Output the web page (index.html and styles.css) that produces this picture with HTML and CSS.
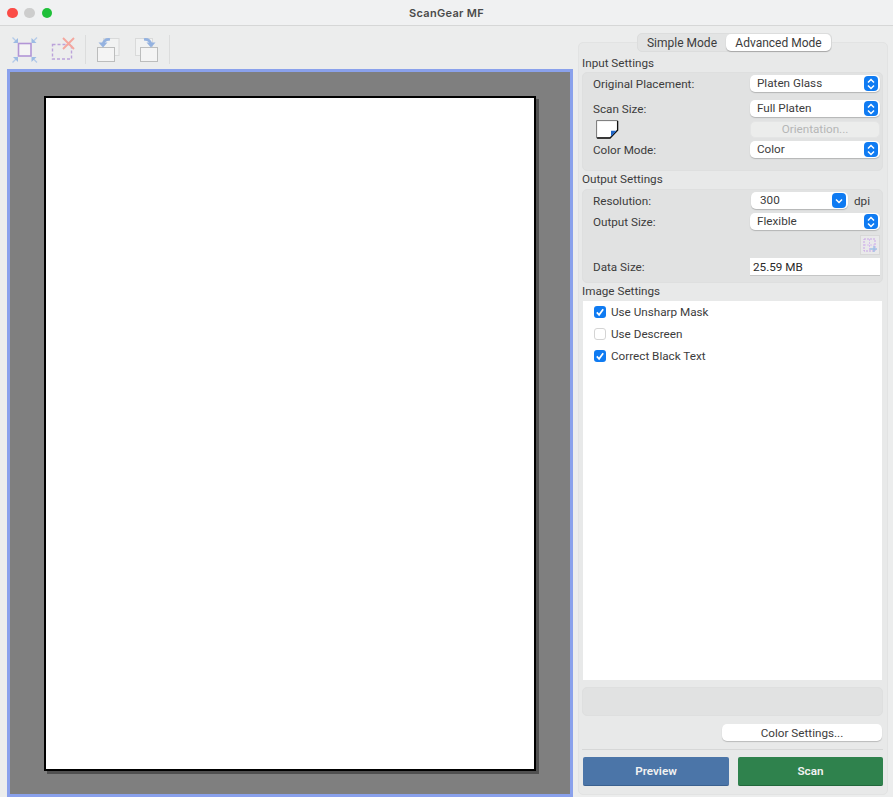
FILE: index.html
```html
<!DOCTYPE html>
<html lang="en">
<head>
  <meta charset="UTF-8">
  <meta name="viewport" content="width=device-width, initial-scale=1.0">
  <title>ScanGear MF</title>
  <link rel="stylesheet" href="styles.css">
</head>
<body>
  <div class="titlebar">
    <div class="lights">
      <span class="light red"></span>
      <span class="light gray"></span>
      <span class="light green"></span>
    </div>
    <div class="title">ScanGear MF</div>
  </div>

  <div class="main">
    <div class="left">
      <div class="toolbar">
        <svg class="tool" width="26" height="28" viewBox="0 0 26 28">
          <rect x="6.500" y="7.500" width="12.500" height="12.500" fill="#f4f4f4" stroke="#b295d6" stroke-width="1.600"/>
          <g fill="none" stroke="#b4cbe9" stroke-width="1.300">
            <path d="M0.500 1.500l4 4M0.500 26.500l4-4M25 1.500l-4 4M25 26.500l-4-4"/>
          </g>
          <g fill="#9dbbe4">
            <path d="M6 7v-5l-5 5z"/>
            <path d="M6 21v5l-5-5z"/>
            <path d="M19.500 7v-5l5 5z"/>
            <path d="M19.500 21v5l5-5z"/>
          </g>
        </svg>
        <svg class="tool" width="26" height="28" viewBox="0 0 26 28">
          <rect x="2.500" y="8.500" width="19" height="14.500" fill="none" stroke="#bba3da" stroke-width="1.400" stroke-dasharray="3 2"/>
          <path d="M13 2l11 11M24 2l-11 11" fill="none" stroke="#f5a79e" stroke-width="1.900"/>
        </svg>
        <span class="tool-sep"></span>
        <svg class="tool" width="26" height="28" viewBox="0 0 26 28">
          <rect x="7.500" y="2.500" width="15.500" height="17" fill="#f1f2f2" stroke="#d9dada"/>
          <rect x="1.500" y="11.500" width="17" height="14" fill="#f4f4f4" stroke="#bcbdbd"/>
          <path d="M14 3.500c-3.500-.6-6 .8-7 4.500" fill="none" stroke="#94b2e0" stroke-width="2.600"/>
          <path d="M2.500 6.500h9l-4.500 5z" fill="#94b2e0"/>
        </svg>
        <svg class="tool" width="26" height="28" viewBox="0 0 26 28">
          <rect x="1.500" y="2.500" width="17" height="17" fill="#f1f2f2" stroke="#d9dada"/>
          <rect x="6.500" y="11.500" width="17" height="14" fill="#f4f4f4" stroke="#bcbdbd"/>
          <path d="M10 3.500c3.500-.6 6 .8 7 4.500" fill="none" stroke="#94b2e0" stroke-width="2.600"/>
          <path d="M21.500 6.500h-9l4.500 5z" fill="#94b2e0"/>
        </svg>
        <span class="tool-sep"></span>
      </div>
      <div class="preview">
        <div class="paper"></div>
      </div>
    </div>

    <div class="right">
      <div class="tabs">
        <div class="tab">Simple Mode</div>
        <div class="tab active">Advanced Mode</div>
      </div>
      <div class="panel">
        <div class="section-label first">Input Settings</div>
        <div class="group input-group">
          <div class="row">
            <label>Original Placement:</label>
            <div class="select">Platen Glass<span class="stepper"><svg width="8" height="12" viewBox="0 0 8 12"><path d="M1 4.500l3-3 3 3M1 7.500l3 3 3-3" fill="none" stroke="#fff" stroke-width="1.500"/></svg></span></div>
          </div>
          <div class="row gap-8">
            <label>Scan Size:</label>
            <div class="select">Full Platen<span class="stepper"><svg width="8" height="12" viewBox="0 0 8 12"><path d="M1 4.500l3-3 3 3M1 7.500l3 3 3-3" fill="none" stroke="#fff" stroke-width="1.500"/></svg></span></div>
          </div>
          <div class="row orient-row">
            <svg class="page-icon" width="23" height="19" viewBox="0 0 23 19">
              <path d="M.600 .600h21v9.500l-7.500 7.800h-13.500z" fill="#fff" stroke="#555" stroke-width=".8"/>
              <path d="M21.600 1v9.300l-7.500 7.700h-13" fill="none" stroke="#111" stroke-width="1.300"/>
              <path d="M15 16.500l5.500-5.700h-5.500z" fill="#1f66c8"/>
            </svg>
            <div class="plain-btn disabled">Orientation...</div>
          </div>
          <div class="row gap-3">
            <label>Color Mode:</label>
            <div class="select">Color<span class="stepper"><svg width="8" height="12" viewBox="0 0 8 12"><path d="M1 4.500l3-3 3 3M1 7.500l3 3 3-3" fill="none" stroke="#fff" stroke-width="1.500"/></svg></span></div>
          </div>
        </div>

        <div class="section-label">Output Settings</div>
        <div class="group output-group">
          <div class="row">
            <label>Resolution:</label>
            <div class="res-wrap">
              <div class="select res">300<span class="stepper"><svg width="8" height="6" viewBox="0 0 8 6"><path d="M1 1.500l3 3 3-3" fill="none" stroke="#fff" stroke-width="1.500"/></svg></span></div>
              <span class="unit">dpi</span>
            </div>
          </div>
          <div class="row gap-4">
            <label>Output Size:</label>
            <div class="select">Flexible<span class="stepper"><svg width="8" height="12" viewBox="0 0 8 12"><path d="M1 4.500l3-3 3 3M1 7.500l3 3 3-3" fill="none" stroke="#fff" stroke-width="1.500"/></svg></span></div>
          </div>
          <div class="size-tool">
            <svg width="20" height="20" viewBox="0 0 20 20">
              <rect x=".5" y=".5" width="19" height="19" fill="#e9e9ea" stroke="#d8d8d8"/>
              <rect x="4" y="4" width="11" height="12" fill="none" stroke="#c9a5e8" stroke-dasharray="2 1"/>
              <path d="M4 10h11M9.500 4v12" fill="none" stroke="#d7bdee" stroke-dasharray="2 1"/>
              <path d="M10 14h7M14 11v6" fill="none" stroke="#9fc0e6" stroke-width="1.400"/>
            </svg>
          </div>
          <div class="row gap-3">
            <label>Data Size:</label>
            <div class="field">25.59 MB</div>
          </div>
        </div>

        <div class="section-label">Image Settings</div>
        <div class="image-list">
          <div class="check-row"><span class="check on"><svg width="12" height="12" viewBox="0 0 12 12"><path d="M2.800 6.300l2.300 2.500 4.100-5.600" fill="none" stroke="#fff" stroke-width="1.700"/></svg></span>Use Unsharp Mask</div>
          <div class="check-row"><span class="check"></span>Use Descreen</div>
          <div class="check-row"><span class="check on"><svg width="12" height="12" viewBox="0 0 12 12"><path d="M2.800 6.300l2.300 2.500 4.100-5.600" fill="none" stroke="#fff" stroke-width="1.700"/></svg></span>Correct Black Text</div>
        </div>

        <div class="empty-box"></div>
        <div class="color-row">
          <div class="plain-btn color-btn">Color Settings...</div>
        </div>
        <div class="separator"></div>
        <div class="actions">
          <div class="action preview-btn">Preview</div>
          <div class="action scan-btn">Scan</div>
        </div>
      </div>
    </div>
  </div>
</body>
</html>
```

FILE: styles.css
```css
* {
  box-sizing: border-box;
}
html, body {
  height: 100%;
}
body {
  margin: 0;
  width: 893px;
  height: 797px;
  overflow: hidden;
  background: #eceded;
  font-family: Roboto, "Liberation Sans", sans-serif;
  font-size: 11.700px;
  color: #3c3c3c;
}
.titlebar {
  height: 26px;
  display: flex;
  align-items: center;
  justify-content: center;
  background: #f0f1f2;
  border-bottom: 1px solid #d6d7d7;
  position: relative;
}
.lights {
  position: absolute;
  left: 7px;
  top: 7.500px;
  display: flex;
  gap: 6.800px;
}
.light {
  width: 10.500px;
  height: 10.500px;
  border-radius: 50%;
}
.light.red { background: #fb4c47; }
.light.gray { background: #cdcdcd; }
.light.green { background: #1fc039; }
.title {
  font-family: Inter, sans-serif;
  font-size: 11px;
  font-weight: 600;
  color: #4a4a4a;
  letter-spacing: 0.3px;
}
.main {
  display: flex;
  height: 771px;
}
.left {
  width: 578px;
  padding-left: 7px;
  display: flex;
  flex-direction: column;
}
.toolbar {
  height: 43px;
  padding: 10px 0 0 5px;
  display: flex;
  align-items: flex-start;
}
.tool {
  margin-right: 12px;
}
.tool-sep {
  width: 1px;
  height: 29px;
  margin: -1px 10px 0 -3px;
  background: #dcdddd;
}
.preview {
  width: 566px;
  flex: 1;
  background: #7f7f7f;
  border: 3px solid #8aa1ec;
  padding: 24px 0 0 34px;
}
.paper {
  width: 492px;
  height: 675px;
  background: #fff;
  border: 2px solid #000;
  box-shadow: 3px 3px 0 #505050;
}
.right {
  width: 310px;
  padding-top: 7px;
  display: flex;
  flex-direction: column;
  align-items: center;
}
.tabs {
  display: flex;
  height: 19px;
  width: 195px;
  margin: 0 0 -10px 3px;
  background: #e3e4e4;
  border: 1px solid #dcdddd;
  border-radius: 5px;
  position: relative;
  font-size: 12px;
}
.tab {
  flex: 1;
  display: flex;
  align-items: center;
  justify-content: center;
  border-radius: 5px;
}
.tab.active {
  flex: 0 0 105px;
  background: #fff;
  box-shadow: 0 1px 1px rgba(0, 0, 0, 0.25);
}
.panel {
  width: 310px;
  height: 753px;
  background: #e8e9e9;
  border: 1px solid #e2e3e3;
  border-radius: 5px;
  padding: 0 4px 0 3px;
}
.section-label {
  height: 18px;
  line-height: 17px;
}
.section-label.first {
  margin-top: 12px;
  height: 17px;
}
.group {
  background: #e1e2e2;
  border: 1px solid #dedfdf;
  border-radius: 5px;
  padding: 2px 2px 0 10px;
}
.input-group {
  height: 99px;
}
.output-group {
  height: 94px;
}
.row {
  display: flex;
  align-items: center;
  justify-content: space-between;
  height: 17px;
}
.gap-8 { margin-top: 8px; }
.gap-4 { margin-top: 4px; }
.gap-3 { margin-top: 3px; }
.select {
  width: 130px;
  height: 17px;
  background: #fff;
  border-radius: 5px;
  box-shadow: 0 1px 1px rgba(0, 0, 0, 0.2);
  padding: 0 0 2px 7px;
  display: flex;
  align-items: center;
  justify-content: space-between;
}
.stepper {
  width: 14px;
  height: 15px;
  margin: 0 2px -2px 0;
  border-radius: 4px;
  background: #0f7bf2;
  display: flex;
  align-items: center;
  justify-content: center;
}
.orient-row {
  margin-top: 4px;
  align-items: flex-start;
}
.page-icon {
  margin: -1px 0 0 3px;
}
.plain-btn {
  width: 130px;
  height: 17px;
  border-radius: 5px;
  display: flex;
  align-items: center;
  justify-content: center;
  background: #fff;
  box-shadow: 0 1px 1px rgba(0, 0, 0, 0.2);
}
.plain-btn.disabled {
  background: #ecedec;
  color: #b5b6b6;
  box-shadow: none;
  border: 1px solid #e4e5e5;
  padding-bottom: 2px;
}
.res-wrap {
  display: flex;
  align-items: center;
  width: 130px;
}
.select.res {
  width: 97px;
  margin-left: 1px;
  padding-left: 9px;
}
.unit {
  margin-left: 6px;
}
.size-tool {
  height: 20px;
  margin-top: 5px;
  display: flex;
  justify-content: flex-end;
}
.field {
  width: 130px;
  height: 17px;
  background: #fff;
  box-shadow: 0 1px 0 rgba(0, 0, 0, 0.12);
  padding-left: 3px;
  display: flex;
  align-items: center;
  color: #2a2a2a;
}
.image-list {
  height: 379px;
  margin: 0 1px;
  background: #fff;
}
.check-row {
  height: 22px;
  padding-left: 11px;
  display: flex;
  align-items: center;
  gap: 5px;
}
.check {
  width: 12px;
  height: 12px;
  border-radius: 3px;
  background: #fff;
  border: 1px solid #d4d4d4;
  display: flex;
}
.check.on {
  background: #0f7bf2;
  border: none;
}
.empty-box {
  height: 29px;
  margin-top: 7px;
  background: #e1e2e2;
  border: 1px solid #dedfdf;
  border-radius: 5px;
}
.color-row {
  margin-top: 8px;
  display: flex;
  justify-content: flex-end;
  padding-right: 1px;
}
.color-btn {
  width: 160px;
}
.separator {
  height: 1px;
  margin-top: 8px;
  background: #d6d7d7;
}
.actions {
  display: flex;
  justify-content: space-between;
  margin: 7px 0 0 1px;
}
.action {
  width: 146px;
  height: 29px;
  border-radius: 2px;
  color: #f2f2f2;
  font-weight: 600;
  display: flex;
  align-items: center;
  justify-content: center;
}
.preview-btn {
  background: #4b75a8;
  border-bottom: 1px solid #3b618f;
}
.scan-btn {
  width: 145px;
  background: #2f824d;
  border-bottom: 1px solid #22683c;
}
```
